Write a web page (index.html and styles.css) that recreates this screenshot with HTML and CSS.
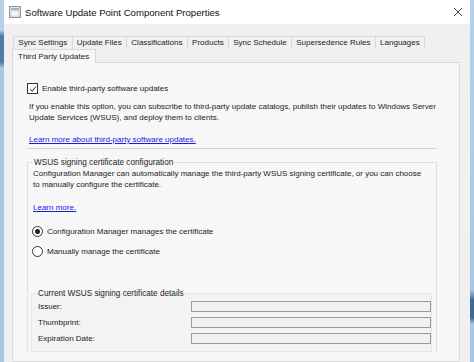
FILE: index.html
```html
<!DOCTYPE html>
<html>
<head>
<meta charset="utf-8">
<link rel="stylesheet" href="styles.css">
</head>
<body>
<div class="edge edge-left"></div>
<div class="window">
  <div class="titlebar">
    <svg class="app-icon" width="12" height="12" viewBox="0 0 12 12">
      <rect x="0.5" y="0.5" width="11" height="11" fill="#dfe6ec" stroke="#8a97a3"/>
      <rect x="2" y="2" width="8" height="2" fill="#9fb3c4"/>
      <rect x="2" y="5" width="8" height="5" fill="#f4f7f9" stroke="#b5c0ca" stroke-width="0.6"/>
    </svg>
    <span class="title">Software Update Point Component Properties</span>
    <span class="close">
      <svg width="10" height="10" viewBox="0 0 10 10"><path d="M1 1 L9 9 M9 1 L1 9" stroke="#333" stroke-width="0.9"/></svg>
    </span>
  </div>
  <div class="content">
    <div class="tabs">
      <div class="tabrow back">
        <div class="tab">Sync Settings</div>
        <div class="tab">Update Files</div>
        <div class="tab">Classifications</div>
        <div class="tab">Products</div>
        <div class="tab">Sync Schedule</div>
        <div class="tab">Supersedence Rules</div>
        <div class="tab">Languages</div>
      </div>
      <div class="tabrow front">
        <div class="tab selected">Third Party Updates</div>
      </div>
    </div>
    <div class="panel">
      <label class="check-row">
        <span class="checkbox">
          <svg width="8" height="8" viewBox="0 0 8 8"><path d="M1 4.2 L3 6.3 L7 1.5" fill="none" stroke="#222" stroke-width="1"/></svg>
        </span>
        <span>Enable third-party software updates</span>
      </label>
      <p class="para">If you enable this option, you can subscribe to third-party update catalogs, publish their updates to Windows Server<br>Update Services (WSUS), and deploy them to clients.</p>
      <a class="link link-main">Learn more about third-party software updates.</a>
      <div class="separator"></div>
      <fieldset class="group">
        <legend>WSUS signing certificate configuration</legend>
        <p class="para inner">Configuration Manager can automatically manage the third-party WSUS signing certificate, or you can choose<br>to manually configure the certificate.</p>
        <a class="link link-small">Learn more.</a>
        <div class="radio-row first">
          <span class="radio checked"><span class="dot"></span></span>
          <span>Configuration Manager manages the certificate</span>
        </div>
        <div class="radio-row">
          <span class="radio"></span>
          <span>Manually manage the certificate</span>
        </div>
        <fieldset class="details">
          <legend>Current WSUS signing certificate details</legend>
          <div class="field-row"><span class="label">Issuer:</span><span class="field"></span></div>
          <div class="field-row"><span class="label">Thumbprint:</span><span class="field"></span></div>
          <div class="field-row"><span class="label">Expiration Date:</span><span class="field"></span></div>
        </fieldset>
      </fieldset>
    </div>
  </div>
</div>
<div class="edge edge-right"></div>
</body>
</html>
```
FILE: styles.css
```css
html, body {
  margin: 0;
  padding: 0;
}
body {
  width: 474px;
  height: 362px;
  overflow: hidden;
  display: flex;
  background: #a9c6e2;
  font-family: "Liberation Sans", Arial, sans-serif;
  font-size: 8px;
  color: #1c1c1c;
}
.edge {
  width: 4px;
  flex: none;
  background: linear-gradient(#b7d0e8 0, #b7d0e8 30px, #4f7ca6 36px, #4f7ca6 62px, #a9c6e2 68px);
}
.edge-right {
  background: linear-gradient(#b7d0e8 0, #a9c6e2 290px, #3d6b96 300px, #3d6b96 318px, #a9c6e2 324px);
}
.window {
  width: 466px;
  flex: none;
  display: flex;
  flex-direction: column;
  background: #f0f0f0;
}
.titlebar {
  height: 24px;
  flex: none;
  background: #ffffff;
  display: flex;
  align-items: center;
  padding-left: 5px;
}
.app-icon {
  flex: none;
  margin-right: 4px;
}
.title {
  font-size: 9.6px;
  color: #111;
}
.close {
  margin-left: auto;
  width: 24px;
  height: 24px;
  display: flex;
  align-items: center;
  justify-content: center;
}
.content {
  flex: 1;
  display: flex;
  flex-direction: column;
  padding: 12px 10px 0 8px;
}
.tabs {
  display: flex;
  flex-direction: column;
}
.tabrow {
  display: flex;
}
.tabrow.back {
  padding-left: 1px;
  height: 13px;
}
.tab {
  height: 12px;
  line-height: 12px;
  padding: 0 4px;
  border: 1px solid #d9d9d9;
  border-bottom: none;
  margin-right: -1px;
  background: #f0f0f0;
  white-space: nowrap;
}
.tabrow.back .tab {
  padding: 0 4.3px;
}
.tabrow.front {
  height: 13px;
}
.tab.selected {
  height: 13px;
  line-height: 13px;
  padding: 0 6px 0 5px;
  background: #f7f7f7;
  position: relative;
  z-index: 1;
  margin-bottom: -1px;
}
.panel {
  flex: 1;
  border: 1px solid #d9d9d9;
  background: #f7f7f7;
  padding: 20px 22px 0 14px;
}
.check-row {
  display: flex;
  align-items: center;
  height: 11px;
}
.checkbox {
  width: 9px;
  height: 9px;
  border: 1px solid #333;
  background: #fff;
  margin-right: 4px;
  display: flex;
  align-items: center;
  justify-content: center;
}
.para {
  margin: 7px 0 0 2px;
  line-height: 11px;
}
.link {
  display: block;
  color: #1a1ae6;
  text-decoration: underline;
  line-height: 11px;
}
.link-main {
  margin: 11px 0 0 2px;
}
.separator {
  height: 1px;
  background: #d5d5d5;
  margin: 3px 0 0 0;
}
.group {
  margin: 8px 0 0 0;
  padding: 0 4px 0 3px;
  border: 1px solid #e0e0e0;
  border-bottom: none;
  min-width: 0;
}
.group > legend {
  padding: 0 1px;
  margin-left: 2px;
  line-height: 11px;
  font-size: 8.2px;
}
.para.inner {
  margin: 1px 0 0 2px;
  line-height: 10.8px;
}
.link-small {
  margin: 11px 0 0 2px;
}
.radio-row {
  display: flex;
  align-items: center;
  height: 11px;
  margin-left: 1px;
  margin-top: 9px;
}
.radio-row.first {
  margin-top: 13px;
}
.radio {
  width: 9px;
  height: 9px;
  border: 1px solid #333;
  border-radius: 50%;
  background: #fff;
  margin-right: 4px;
  display: flex;
  align-items: center;
  justify-content: center;
}
.dot {
  width: 5px;
  height: 5px;
  border-radius: 50%;
  background: #222;
}
.details {
  margin: 31px 0 0 0;
  padding: 2px 0 6px 6px;
  border: 1px solid #e6e6e6;
  background: #f3f3f3;
  min-width: 0;
}
.details > legend {
  padding: 0;
  line-height: 11px;
  font-size: 8.2px;
}
.field-row {
  display: flex;
  align-items: center;
  height: 12px;
  margin-bottom: 4px;
}
.field-row:last-child {
  margin-bottom: 0;
}
.label {
  width: 153px;
  flex: none;
}
.field {
  flex: 1;
  height: 9px;
  border: 1.5px solid #9b9b9b;
  background: #f0f0f0;
}
```
